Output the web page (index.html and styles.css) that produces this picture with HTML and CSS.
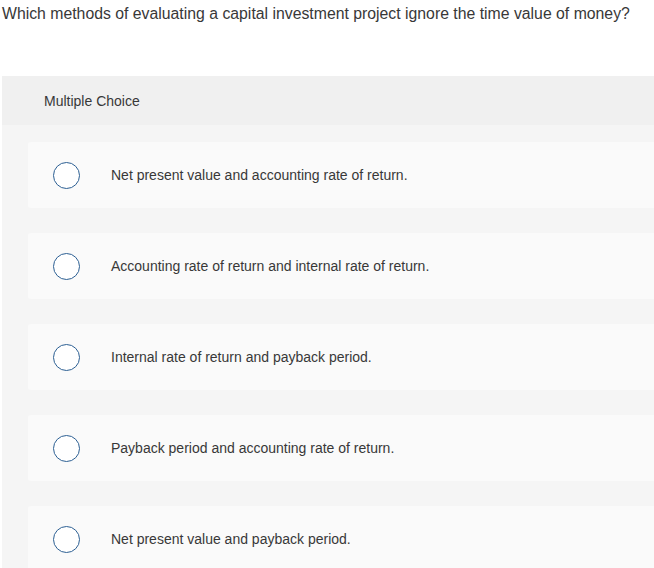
FILE: index.html
```html
<!DOCTYPE html>
<html>
<head>
<meta charset="utf-8">
<link rel="stylesheet" href="styles.css">
</head>
<body>
<p class="question">Which methods of evaluating a capital investment project ignore the time value of money?</p>
<div class="panel">
  <div class="panel-header">Multiple Choice</div>
  <div class="options">
    <label class="option"><span class="radio"></span><span class="option-text">Net present value and accounting rate of return.</span></label>
    <label class="option"><span class="radio"></span><span class="option-text">Accounting rate of return and internal rate of return.</span></label>
    <label class="option"><span class="radio"></span><span class="option-text">Internal rate of return and payback period.</span></label>
    <label class="option"><span class="radio"></span><span class="option-text">Payback period and accounting rate of return.</span></label>
    <label class="option"><span class="radio"></span><span class="option-text">Net present value and payback period.</span></label>
  </div>
</div>
</body>
</html>
```
FILE: styles.css
```css
html, body {
  margin: 0;
  padding: 0;
  background: #ffffff;
  font-family: "Liberation Sans", Arial, sans-serif;
  color: #333333;
}
.question {
  margin: 0;
  padding: 4px 0 0 2px;
  font-size: 15.8px;
  line-height: 20px;
  color: #383838;
}
.panel {
  margin: 52px 0 0 2px;
  background: #f5f5f5;
  height: 500px;
}
.panel-header {
  background: #f0f0f0;
  height: 49px;
  padding-left: 42px;
  display: flex;
  align-items: center;
  font-size: 14px;
  color: #383838;
}
.options {
  display: flex;
  flex-direction: column;
  gap: 25px;
  padding: 17px 0 0 26px;
}
.option {
  display: flex;
  align-items: center;
  height: 66px;
  background: #fafafa;
  border-radius: 3px 0 0 3px;
  padding-left: 25px;
}
.radio {
  width: 25px;
  height: 25px;
  border: 1.5px solid #2c5f93;
  border-radius: 50%;
  background: #ffffff;
  flex: none;
}
.option-text {
  margin-left: 31px;
  font-size: 14px;
  color: #383838;
}
```
